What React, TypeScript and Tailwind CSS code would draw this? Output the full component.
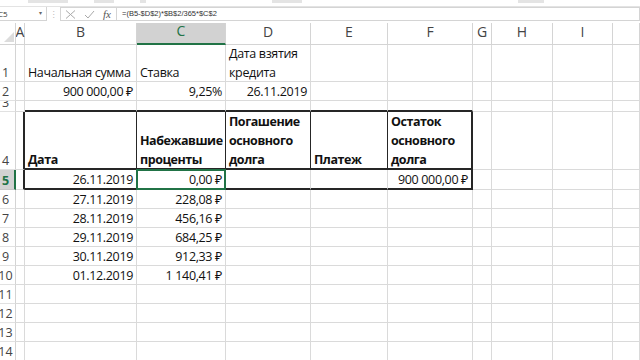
import React from "react";

type C = { t?: string; a?: "l" | "r"; b?: boolean; cls?: string; active?: boolean };

const light = "border-r border-b border-[#dadada]";
const tTop = "border-r border-r-[#dadada] border-b-2 border-b-[#262626]";
const leftDark = "border-r-2 border-r-[#262626] border-b border-b-[#dadada]";
const hdrIn = "border-r border-r-[#262626] border-b-2 border-b-[#262626]";
const hdrRight = "border-r-2 border-r-[#262626] border-b-2 border-b-[#262626]";
const r5In = "border-r border-r-[#dadada] border-b-2 border-b-[#262626]";
const r5Right = "border-r-2 border-r-[#262626] border-b-2 border-b-[#262626]";

function Cell({ t, a = "l", b, cls, active }: C) {
  return (
    <div
      className={`relative flex items-end overflow-visible ${cls ?? light} ${
        a === "r" ? "justify-end pr-[3px]" : "justify-start pl-[3px]"
      } ${b ? "font-bold tracking-[-0.45px]" : "tracking-[-0.35px]"}`}
    >
      {t && (
        <span className={`${a === "r" ? "whitespace-nowrap" : "whitespace-pre-line"} leading-[19px] mb-[-1px]`}>{t}</span>
      )}
      {active && (
        <div className="absolute left-[-1px] top-[-1px] right-[-1px] bottom-[-2px] border-2 border-[#217346]" />
      )}
    </div>
  );
}

function RowHdr({ n, sel }: { n: number; sel?: boolean }) {
  return (
    <div
      className={`flex items-end justify-start border-b overflow-hidden ${
        sel
          ? "bg-[#d2d2d2] text-[#217346] font-bold border-r-2 border-r-[#217346] border-b-[#c6c6c6]"
          : "bg-white text-[#444] border-r border-r-[#d4d4d4] border-b-[#e1e1e1]"
      }`}
    >
      <span className="w-[11px] shrink-0 flex justify-center whitespace-nowrap leading-[19px] text-[12.5px] mb-[-1px]">{n}</span>
    </div>
  );
}

function ColHdr({ l, sel }: { l: string; sel?: boolean }) {
  return (
    <div
      className={`flex items-end justify-center pb-[2px] border-r border-r-[#d4d4d4] text-[14px] ${
        sel
          ? "bg-[#d2d2d2] text-[#217346] border-b-2 border-b-[#217346]"
          : "bg-white text-[#444] border-b border-b-[#d4d4d4]"
      }`}
    >
      {l}
    </div>
  );
}

const cols = ["A", "B", "C", "D", "E", "F", "G", "H", "I", ""];

export default function App() {
  const empty = (cls?: string): C => ({ cls });
  const rows: { n: number; cells: C[] }[] = [
    {
      n: 1,
      cells: [
        {},
        { t: "Начальная сумма" },
        { t: "Ставка" },
        { t: "Дата взятия\nкредита" },
        {}, {}, {}, {}, {}, {},
      ],
    },
    {
      n: 2,
      cells: [
        {},
        { t: "900 000,00 ₽", a: "r" },
        { t: "9,25%", a: "r" },
        { t: "26.11.2019", a: "r" },
        {}, {}, {}, {}, {}, {},
      ],
    },
    {
      n: 3,
      cells: [{}, empty(tTop), empty(tTop), empty(tTop), empty(tTop), empty(tTop), {}, {}, {}, {}],
    },
    {
      n: 4,
      cells: [
        empty(leftDark),
        { t: "Дата", b: true, cls: hdrIn },
        { t: "Набежавшие\nпроценты", b: true, cls: hdrIn },
        { t: "Погашение\nосновного\nдолга", b: true, cls: hdrIn },
        { t: "Платеж", b: true, cls: hdrIn },
        { t: "Остаток\nосновного\nдолга", b: true, cls: hdrRight },
        {}, {}, {}, {},
      ],
    },
    {
      n: 5,
      cells: [
        empty(leftDark),
        { t: "26.11.2019", a: "r", cls: r5In },
        { t: "0,00 ₽", a: "r", cls: r5In, active: true },
        empty(r5In),
        empty(r5In),
        { t: "900 000,00 ₽", a: "r", cls: r5Right },
        {}, {}, {}, {},
      ],
    },
    ...[
      ["27.11.2019", "228,08 ₽"],
      ["28.11.2019", "456,16 ₽"],
      ["29.11.2019", "684,25 ₽"],
      ["30.11.2019", "912,33 ₽"],
      ["01.12.2019", "1 140,41 ₽"],
    ].map(([d, v], i) => ({
      n: 6 + i,
      cells: [{}, { t: d, a: "r" as const }, { t: v, a: "r" as const }, {}, {}, {}, {}, {}, {}, {}],
    })),
    ...[11, 12, 13, 14].map((n) => ({ n, cells: Array.from({ length: 10 }, () => ({} as C)) })),
  ];

  return (
    <div
      className="w-[640px] h-[360px] overflow-hidden bg-white text-[#111] text-[12.5px]"
      style={{ fontFamily: '"Open Sans", "Noto Sans", "DejaVu Sans", sans-serif' }}
    >
      {/* ribbon remnant */}
      <div className="h-[7px] bg-white border-b border-[#e3e3e3] flex items-start gap-[6px] pl-[28px] overflow-hidden">
        <div className="w-[40px] h-[3px] bg-[#e4e4e4]" />
        <div className="w-[20px] h-[3px] bg-[#e4e4e4] ml-[20px]" />
        <div className="w-[6px] h-[3px] bg-[#e4e4e4] ml-[20px]" />
        <div className="w-[30px] h-[3px] bg-[#e4e4e4] ml-[120px]" />
        <div className="w-[26px] h-[3px] bg-[#e4e4e4] ml-[210px]" />
      </div>
      {/* formula bar */}
      <div className="h-[14px] flex items-stretch text-[8px] text-[#333]">
        <div className="w-[47px] flex items-center justify-between bg-white border-r border-b border-[#d4d4d4] pl-[1px] pr-[4px]">
          <span className="-ml-[3px]">C5</span>
          <span className="text-[6px] text-[#666]">▾</span>
        </div>
        <div className="w-[13px] flex items-center justify-center text-[#b5b5b5] text-[8px]">⋮</div>
        <div className="w-[56px] flex items-center gap-[8px] pl-[4px] border border-[#d4d4d4] border-r-0">
          <svg width="11" height="9" viewBox="0 0 11 9">
            <path d="M1 0.5 L10 8.5 M10 0.5 L1 8.5" stroke="#a9a9a9" strokeWidth="1" fill="none" />
          </svg>
          <svg width="11" height="9" viewBox="0 0 11 9">
            <path d="M1 5 L4 8 L10 1" stroke="#a9a9a9" strokeWidth="1" fill="none" />
          </svg>
          <span className="italic text-[11px] text-[#555] leading-none" style={{ fontFamily: '"Liberation Serif", serif' }}>
            fx
          </span>
        </div>
        <div className="flex-1 flex items-center pl-[5px] border border-[#d4d4d4] text-[7.5px] text-[#333]" style={{ fontFamily: '"Liberation Sans", sans-serif' }}>
          =(B5-$D$2)*$B$2/365*$C$2
        </div>
      </div>
      <div className="h-[2px] bg-white" />
      {/* sheet grid */}
      <div className="grid grid-cols-[16px_9px_112px_89px_85px_77px_85px_19px_61px_60px_27px] grid-rows-[22px_37px_19px_11px_58px_20px_19px_19px_19px_19px_19px_19px_19px_19px_19px]">
        <div className="relative bg-white border-r border-b border-[#d4d4d4]">
          <svg className="absolute right-[1px] bottom-[2px]" width="10" height="10" viewBox="0 0 10 10">
            <path d="M10 0 L10 10 L0 10 Z" fill="#dcdcdc" />
          </svg>
        </div>
        {cols.map((c, i) => (
          <ColHdr key={i} l={c} sel={c === "C"} />
        ))}
        {rows.map((r) => (
          <React.Fragment key={r.n}>
            <RowHdr n={r.n} sel={r.n === 5} />
            {r.cells.map((c, i) => (
              <Cell key={i} {...c} />
            ))}
          </React.Fragment>
        ))}
      </div>
    </div>
  );
}
